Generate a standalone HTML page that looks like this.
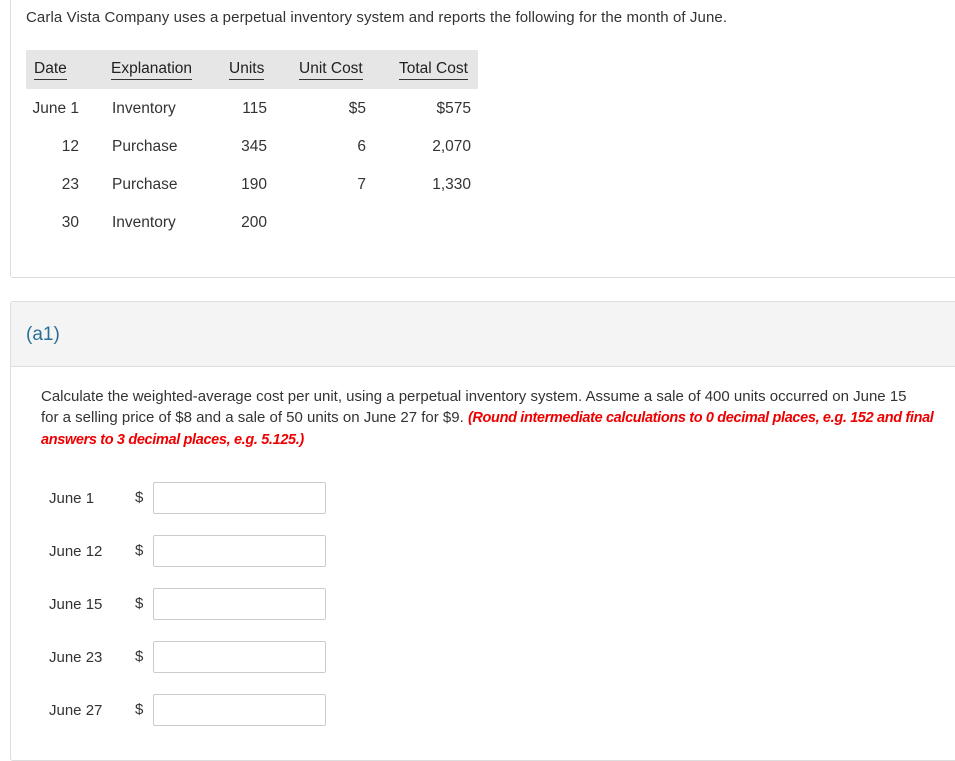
<!DOCTYPE html>
<html><head><style>
*{margin:0;padding:0;box-sizing:border-box}
body{width:955px;height:742px;overflow:hidden;background:#fff;font-family:"Liberation Sans",sans-serif;color:#333;font-size:15.5px;position:relative}
.a{position:absolute;white-space:nowrap}
.card1{position:absolute;left:10px;top:-2px;width:950px;height:280px;border:1px solid #ddd;border-radius:3px}
.card2{position:absolute;left:10px;top:301px;width:950px;height:460px;border:1px solid #ddd;border-radius:3px}
.hdr{position:absolute;left:26px;top:50px;width:452px;height:39px;background:#e6e6e6}
.u{border-bottom:1px solid #333;padding-bottom:1px;color:#222}
.r{text-align:right}
.in{position:absolute;left:153px;width:173px;height:32px;border:1px solid #ccc;border-radius:2px;background:#fff}
.l{font-size:15px}
</style></head><body>
<div class="a" style="left:26px;top:9px;font-size:15px;letter-spacing:0.1px">Carla Vista Company uses a perpetual inventory system and reports the following for the month of June.</div>
<div class="card1"></div>
<div class="hdr"></div>
<div class="a u" style="left:34px;top:60px">Date</div>
<div class="a u" style="left:111px;top:60px">Explanation</div>
<div class="a u" style="left:229px;top:60px">Units</div>
<div class="a u" style="left:299px;top:60px">Unit Cost</div>
<div class="a u" style="left:399px;top:60px">Total Cost</div>
<div class="a r" style="right:876px;top:100px">June 1</div>
<div class="a r" style="right:876px;top:138px">12</div>
<div class="a r" style="right:876px;top:176px">23</div>
<div class="a r" style="right:876px;top:214px">30</div>
<div class="a" style="left:112px;top:100px">Inventory</div>
<div class="a" style="left:112px;top:138px">Purchase</div>
<div class="a" style="left:112px;top:176px">Purchase</div>
<div class="a" style="left:112px;top:214px">Inventory</div>
<div class="a r" style="right:688px;top:100px">115</div>
<div class="a r" style="right:688px;top:138px">345</div>
<div class="a r" style="right:688px;top:176px">190</div>
<div class="a r" style="right:688px;top:214px">200</div>
<div class="a r" style="right:589px;top:100px">$5</div>
<div class="a r" style="right:589px;top:138px">6</div>
<div class="a r" style="right:589px;top:176px">7</div>
<div class="a r" style="right:484px;top:100px">$575</div>
<div class="a r" style="right:484px;top:138px">2,070</div>
<div class="a r" style="right:484px;top:176px">1,330</div>
<div class="card2"><div style="height:65px;background:#f4f4f4;border-bottom:1px solid #ddd"></div></div>
<div class="a" style="left:26px;top:324px;font-size:19px;color:#2a6f97">(a1)</div>
<div class="a" style="left:41px;top:386px;line-height:21px;font-size:15px">Calculate the weighted-average cost per unit, using a perpetual inventory system. Assume a sale of 400 units occurred on June 15<br>for a selling price of $8 and a sale of 50 units on June 27 for $9. <b><i style="color:#e00;letter-spacing:-0.35px;font-size:14.5px">(Round intermediate calculations to 0 decimal places, e.g. 152 and final</i></b><br><b><i style="color:#e00;letter-spacing:-0.35px;font-size:14.5px">answers to 3 decimal places, e.g. 5.125.)</i></b></div>
<div class="a l" style="left:49px;top:490px">June 1</div><div class="a l" style="left:135px;top:489px">$</div><div class="in" style="top:482px"></div>
<div class="a l" style="left:49px;top:543px">June 12</div><div class="a l" style="left:135px;top:542px">$</div><div class="in" style="top:535px"></div>
<div class="a l" style="left:49px;top:596px">June 15</div><div class="a l" style="left:135px;top:595px">$</div><div class="in" style="top:588px"></div>
<div class="a l" style="left:49px;top:649px">June 23</div><div class="a l" style="left:135px;top:648px">$</div><div class="in" style="top:641px"></div>
<div class="a l" style="left:49px;top:702px">June 27</div><div class="a l" style="left:135px;top:701px">$</div><div class="in" style="top:694px"></div>
</body></html>
